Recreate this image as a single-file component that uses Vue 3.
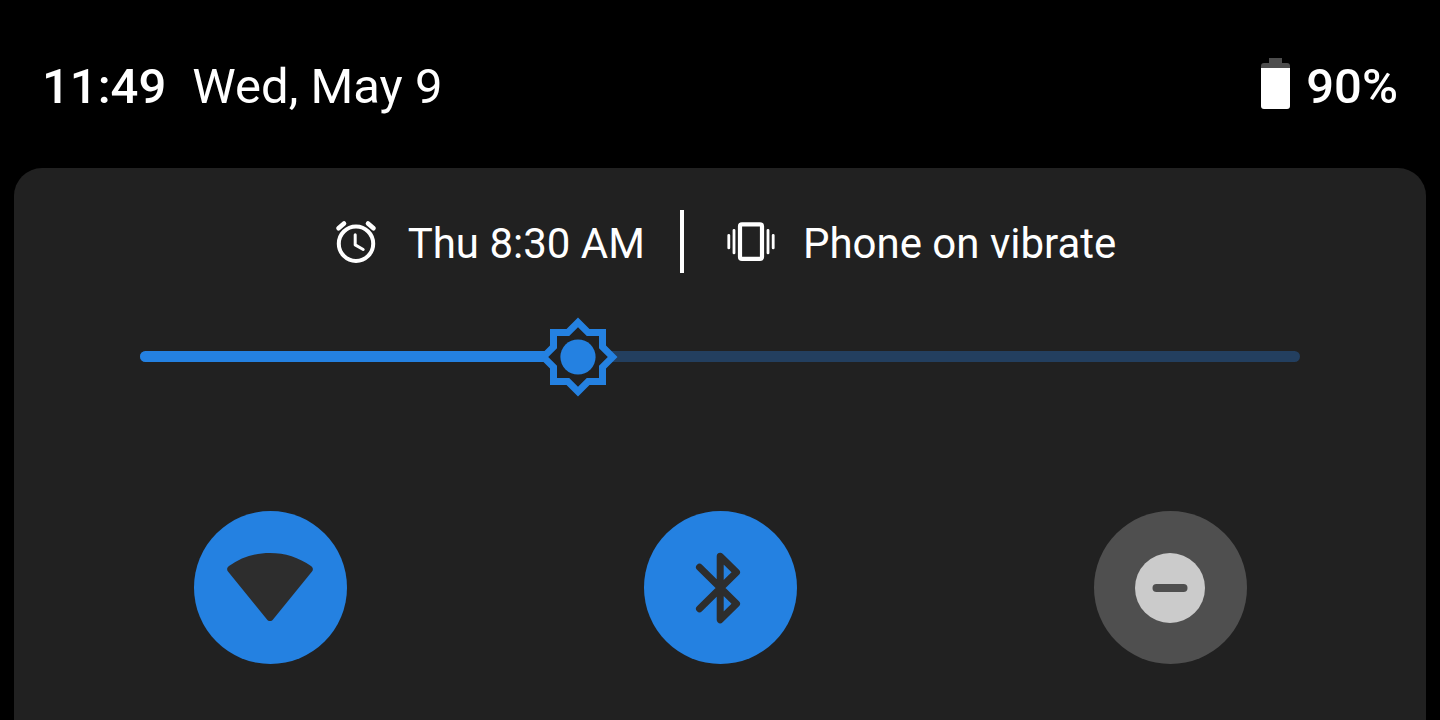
<template>
  <main class="screen">
    <header class="status-bar">
      <div class="clock">
        <time class="time">{{ time }}</time>
        <span class="date">{{ date }}</span>
      </div>
      <div class="battery">
        <svg class="battery-icon" viewBox="0 0 29 51" aria-hidden="true">
          <path d="M8 0h13v5h5a3 3 0 0 1 3 3v2H0V8a3 3 0 0 1 3-3h5z" fill="#4d4d4d" />
          <path d="M0 10h29v38a3 3 0 0 1-3 3H3a3 3 0 0 1-3-3z" fill="#fff" />
        </svg>
        <span class="percent">{{ battery }}%</span>
      </div>
    </header>

    <section class="panel">
      <div class="info-row">
        <div class="info">
          <svg class="info-icon" viewBox="-28 -28 56 56" aria-hidden="true">
            <g fill="none" stroke="#fff" stroke-linecap="round" stroke-linejoin="round">
              <circle cx="0" cy="1.7" r="17.2" stroke-width="4" />
              <path d="M-17.5 -13.8L-12 -18.6M17.5 -13.8L12 -18.6" stroke-width="4.6" />
              <path d="M-0.8 -7.3V2.9L7.2 7.5" stroke-width="3" />
            </g>
          </svg>
          <span class="info-text">{{ alarm }}</span>
        </div>
        <span class="divider"></span>
        <div class="info">
          <svg class="info-icon" viewBox="-28 -28 56 56" aria-hidden="true">
            <g fill="none" stroke="#fff" stroke-linecap="round">
              <rect x="-11" y="-17.7" width="22" height="34.6" rx="2" stroke-width="4.2" />
              <path d="M-17 -11.7V10.9M17 -11.7V10.9M-22.2 -6.7V5.9M22.2 -6.7V5.9" stroke-width="2.8" />
            </g>
          </svg>
          <span class="info-text">{{ ringer }}</span>
        </div>
      </div>

      <div class="brightness">
        <div class="track">
          <div class="track-fill" :style="{ width: brightness + '%' }"></div>
        </div>
        <svg class="sun" :style="{ left: brightness + '%' }" viewBox="-40 -40 80 80" aria-hidden="true">
          <path
            d="M0 -39.5L11.5 -28H28V-11.5L39.5 0L28 11.5V28H11.5L0 39.5L-11.5 28H-28V11.5L-39.5 0L-28 -11.5V-28H-11.5Z"
            fill="#2481e1"
          />
          <path
            d="M0 -29.8L8.8 -21H21V-8.8L29.8 0L21 8.8V21H8.8L0 29.8L-8.8 21H-21V8.8L-29.8 0L-21 -8.8V-21H-8.8Z"
            fill="#212121"
          />
          <circle r="17.6" fill="#2481e1" />
        </svg>
        <input
          v-model.number="brightness"
          class="slider"
          type="range"
          min="0"
          max="100"
          step="0.25"
          aria-label="Brightness"
        />
      </div>

      <div class="tiles">
        <button
          v-for="tile in tiles"
          :key="tile.id"
          type="button"
          :class="['tile', { active: tile.active }]"
          :aria-label="tile.label"
          :aria-pressed="tile.active"
          @click="tile.active = !tile.active"
        >
          <svg class="tile-icon" viewBox="-50 -50 100 100" aria-hidden="true">
            <path
              v-if="tile.id === 'wifi'"
              d="M-42 -16.5C-43.5 -18.5 -43 -20.5 -41 -22C-29 -30.5 -15 -35 0 -35C15 -35 29 -30.5 41 -22C43 -20.5 43.5 -18.5 42 -16.5L3 31.5C1.5 33.5 -1.5 33.5 -3 31.5Z"
              fill="currentColor"
            />
            <path
              v-else-if="tile.id === 'bluetooth'"
              d="M-20.5 -20.8L16.5 15.8L0.2 31.8V-31.8L16.5 -15.8L-20.5 20.8"
              fill="none"
              stroke="currentColor"
              stroke-width="7"
              stroke-linecap="round"
              stroke-linejoin="round"
            />
            <g v-else>
              <circle r="35" fill="currentColor" />
              <rect class="dnd-bar" x="-17.5" y="-4" width="35" height="8" rx="4" />
            </g>
          </svg>
        </button>
      </div>
    </section>
  </main>
</template>

<script setup>
import { ref } from 'vue'

const time = ref('11:49')
const date = ref('Wed, May 9')
const battery = ref(90)
const alarm = ref('Thu 8:30 AM')
const ringer = ref('Phone on vibrate')
const brightness = ref(37.75)

const tiles = ref([
  { id: 'wifi', label: 'Wi-Fi', active: true },
  { id: 'bluetooth', label: 'Bluetooth', active: true },
  { id: 'dnd', label: 'Do not disturb', active: false }
])
</script>

<style>
body {
  margin: 0;
  background: #000;
}
</style>

<style scoped>
.screen {
  display: flex;
  flex-direction: column;
  box-sizing: border-box;
  min-height: 100vh;
  background: #000;
  color: #fff;
  font-family: Roboto, 'Liberation Sans', sans-serif;
}

.status-bar {
  display: flex;
  justify-content: space-between;
  align-items: center;
  padding: 53px 42px 51px;
  font-size: 49px;
  line-height: 60px;
}

.clock {
  display: flex;
  gap: 26px;
  padding-top: 4px;
}

.time,
.percent {
  font-weight: 500;
}

.battery {
  display: flex;
  align-items: center;
  gap: 16px;
}

.battery-icon {
  width: 29px;
  height: 51px;
  margin-bottom: 4px;
}

.percent {
  padding-top: 4px;
}

.panel {
  flex: 1;
  margin: 0 14px;
  padding: 42px 0 48px;
  border-radius: 28px 28px 0 0;
  background: #212121;
}

.info-row {
  display: flex;
  justify-content: center;
  align-items: center;
  gap: 35px;
  padding-left: 4px;
  font-size: 42px;
  line-height: 59px;
}

.info {
  display: flex;
  align-items: center;
  gap: 24px;
}

.info-icon {
  width: 56px;
  height: 56px;
}

.info-text {
  padding-top: 4px;
}

.divider {
  width: 4px;
  height: 63px;
  margin-right: 4px;
  background: #fff;
}

.brightness {
  position: relative;
  display: flex;
  align-items: center;
  height: 79px;
  margin: 44px 126px 0;
}

.track {
  flex: 1;
  height: 11px;
  border-radius: 6px;
  background: #233f5f;
  overflow: hidden;
}

.track-fill {
  height: 100%;
  background: #2481e1;
}

.sun {
  position: absolute;
  top: 0;
  width: 80px;
  height: 80px;
  transform: translateX(-50%);
  pointer-events: none;
}

/* the native control takes the input, the sun is drawn as its thumb */
.slider {
  position: absolute;
  inset: 0;
  width: 100%;
  margin: 0;
  opacity: 0;
  cursor: pointer;
}

.tiles {
  display: grid;
  grid-template-columns: repeat(3, 1fr);
  justify-items: center;
  margin: 115px 31px 0;
}

.tile {
  display: flex;
  justify-content: center;
  align-items: center;
  width: 153px;
  height: 153px;
  padding: 0;
  border: none;
  border-radius: 50%;
  background: #4f4f4f;
  color: #cbcbcb;
  cursor: pointer;
}

.tile.active {
  background: #2481e1;
  color: #2d2d2d;
}

.tile-icon {
  width: 100px;
  height: 100px;
}

.dnd-bar {
  fill: #4f4f4f;
}

.tile.active .dnd-bar {
  fill: #2481e1;
}
</style>
